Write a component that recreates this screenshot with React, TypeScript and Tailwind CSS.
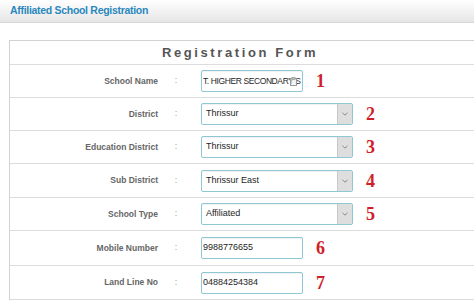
import React from "react";

type Row = {
  label: string;
  value: string;
  kind: "text" | "select";
  num: string;
  h: string;
};

const rows: Row[] = [
  { label: "School Name", value: "T. HIGHER SECONDARY S", kind: "text", num: "1", h: "h-[33px]" },
  { label: "District", value: "Thrissur", kind: "select", num: "2", h: "h-[33px]" },
  { label: "Education District", value: "Thrissur", kind: "select", num: "3", h: "h-[33px]" },
  { label: "Sub District", value: "Thrissur East", kind: "select", num: "4", h: "h-[34px]" },
  { label: "School Type", value: "Affiliated", kind: "select", num: "5", h: "h-[33px]" },
  { label: "Mobile Number", value: "9988776655", kind: "text", num: "6", h: "h-[35px]" },
  { label: "Land Line No", value: "04884254384", kind: "text", num: "7", h: "h-[34px]" },
];

function Field({ row }: { row: Row }) {
  if (row.kind === "text") {
    const isName = row.label === "School Name";
    return (
      <div className="relative flex h-[22px] w-[102px] items-center overflow-hidden rounded-[2px] border border-[#8fc7d3] bg-white pl-[1px] shadow-[inset_0_1px_1px_rgba(0,0,0,0.06)]">
        <span
          className={
            isName
              ? "whitespace-nowrap text-[8.5px] tracking-[-0.4px] text-[#1e1e1e]"
              : "whitespace-nowrap text-[9px] text-[#1e1e1e]"
          }
        >
          {row.value}
        </span>
        {isName && (
          <svg className="absolute right-[5px] top-[6px]" width="7" height="9" viewBox="0 0 7 9">
            <rect x="0.5" y="1.5" width="6" height="7" fill="#eee" fillOpacity="0.6" stroke="#999" strokeWidth="1" />
            <rect x="2" y="0.5" width="3" height="2" fill="#ccc" stroke="#999" strokeWidth="0.8" />
          </svg>
        )}
      </div>
    );
  }
  return (
    <div className="flex h-[22px] w-[152px] items-center overflow-hidden rounded-[2px] border border-[#8fc7d3] bg-white shadow-[inset_0_1px_1px_rgba(0,0,0,0.06)]">
      <span className="flex-1 whitespace-nowrap pl-[4px] text-[9px] text-[#1e1e1e]">{row.value}</span>
      <div className="flex h-full w-[15px] items-center justify-center border-l border-[#c8c8c8] bg-[#dedede]">
        <svg width="6" height="4" viewBox="0 0 6 4">
          <path d="M0.5 0.8 L3 3.2 L5.5 0.8" fill="none" stroke="#888" strokeWidth="1" />
        </svg>
      </div>
    </div>
  );
}

export default function App() {
  return (
    <div className="h-[303px] w-[474px] overflow-hidden bg-white font-['Liberation_Sans',Arial,sans-serif]">
      <div className="flex h-[23px] items-center border-b border-[#d8d8d8] bg-gradient-to-b from-white to-[#e6e6e6] pl-[10px]">
        <span className="text-[10.5px] font-bold tracking-[-0.3px] text-[#2a88bd]">
          Affiliated School Registration
        </span>
      </div>
      <div className="ml-[9px] mt-[17px] w-[480px] border-l border-t border-[#d2d2d2]">
        <div className="flex h-[24px] items-center justify-center border-b border-[#dcdcdc] pr-[19px]">
          <span className="text-[13px] font-bold tracking-[2.6px] text-[#555]">Registration Form</span>
        </div>
        {rows.map((row) => (
          <div key={row.label} className={`flex items-center border-b border-[#dcdcdc] ${row.h}`}>
            <div className="w-[149px] pr-[1px] text-right text-[8.5px] font-bold text-[#666]">{row.label}</div>
            <div className="w-[34px] text-center text-[9px] text-[#999]">:</div>
            <div className="ml-[8px]">
              <Field row={row} />
            </div>
            <span className="ml-[13px] font-['Liberation_Serif',serif] text-[18px] font-bold leading-none text-[#cf1f2b]">
              {row.num}
            </span>
          </div>
        ))}
      </div>
    </div>
  );
}
